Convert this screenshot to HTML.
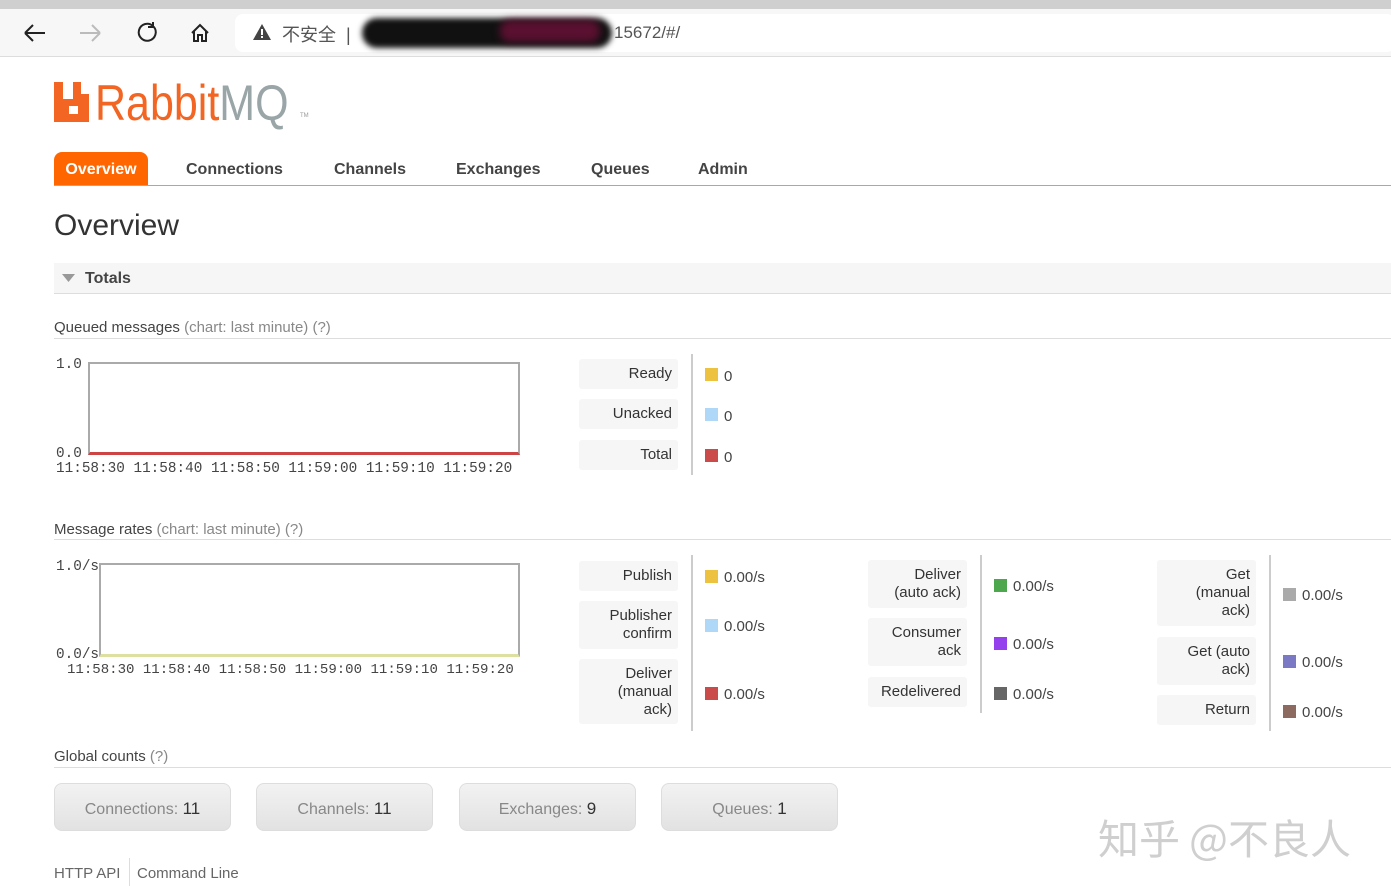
<!DOCTYPE html>
<html><head><meta charset="utf-8"><style>
*{margin:0;padding:0;box-sizing:border-box}
body{width:1391px;height:886px;overflow:hidden;background:#fff;font-family:"Liberation Sans","Noto Sans CJK SC",sans-serif;color:#333;position:relative}
.a{position:absolute;white-space:nowrap}
.lab{position:absolute;background:#f6f6f6;border-radius:3px;text-align:right;padding:6px 6px 0 0;font-size:15px;line-height:18px;color:#333;width:99px}
.sw{position:absolute;width:13px;height:13px}
.val{position:absolute;font-size:15px;color:#444;margin-top:2px}
.vl{position:absolute;width:2px;background:#ccc}
.mono{font-family:"Liberation Mono",monospace;font-size:14.35px;color:#444}
.btn{position:absolute;top:783px;width:177px;height:48px;border-radius:8px;background:linear-gradient(#f2f2f2,#e2e2e2);border:1px solid #ddd;text-align:center;line-height:50px;font-size:16px;color:#888}
.btn b{color:#333;font-weight:normal;font-size:17px}
.nav{position:absolute;top:161px;font-size:16px;font-weight:bold;color:#444}
</style></head><body>
<div class="a" style="left:0;top:0;width:1391px;height:9px;background:#cfcfcf"></div>
<div class="a" style="left:0;top:9px;width:1391px;height:48px;background:#f7f7f7;border-bottom:1px solid #ddd"></div>
<svg class="a" style="left:22px;top:20px" width="200" height="26" viewBox="0 0 200 26">
<path d="M3 13H23M3 13L11 5M3 13L11 21" stroke="#222" stroke-width="2" fill="none"/>
<path d="M58 13H78M78 13L70 5M78 13L70 21" stroke="#bbb" stroke-width="2" fill="none"/>
<path d="M131 6A8.5 8.5 0 1 0 131.5 6.5M131 2V7H126" stroke="#222" stroke-width="2" fill="none"/>
<path d="M170 13L178 5L186 13M172 11V21H176V15H180V21H184V11" stroke="#222" stroke-width="2" fill="none"/>
</svg>
<div class="a" style="left:235px;top:14px;width:1160px;height:38px;background:#fff;border-radius:8px"></div>
<svg class="a" style="left:252px;top:23px" width="20" height="18"><path d="M10 1L19 17H1Z" fill="#444"/><rect x="9" y="6" width="2" height="6" fill="#fff"/><rect x="9" y="13" width="2" height="2" fill="#fff"/></svg>
<div class="a" style="left:282px;top:21px;font-size:18px;color:#555">不安全 &nbsp;|</div>
<div class="a" style="left:362px;top:18px;width:250px;height:30px;background:#111;border-radius:15px;filter:blur(3px)"></div>
<div class="a" style="left:500px;top:20px;width:100px;height:22px;background:#5a1030;border-radius:10px;filter:blur(4px)"></div>
<div class="a" style="left:614px;top:23px;font-size:17px;color:#555">15672/#/</div>

<svg class="a" style="left:54px;top:82px" width="40" height="40"><path d="M0 0H9V17H19V0H27V12H35V40H0Z" fill="#f26522"/><rect x="15" y="24" width="9" height="8" fill="#fff"/></svg>
<div class="a" style="left:95px;top:74px;font-size:50px;color:#f26522;letter-spacing:0px;transform:scaleX(0.86);transform-origin:left;font-weight:300">Rabbit<span style="color:#9aa5a8">MQ</span></div>
<div class="a" style="left:300px;top:113px;font-size:6px;color:#999">TM</div>

<div class="a" style="left:54px;top:152px;width:94px;height:33px;background:#f60;border-radius:8px 8px 0 0;color:#fff;font-weight:bold;font-size:16px;text-align:center;line-height:35px">Overview</div>
<div class="nav" style="left:186px">Connections</div>
<div class="nav" style="left:334px">Channels</div>
<div class="nav" style="left:456px">Exchanges</div>
<div class="nav" style="left:591px">Queues</div>
<div class="nav" style="left:698px">Admin</div>
<div class="a" style="left:54px;top:185px;width:1337px;height:1px;background:#e0a040"></div>

<div class="a" style="left:54px;top:209px;font-size:30px;color:#333">Overview</div>
<div class="a" style="left:54px;top:263px;width:1337px;height:31px;background:#f6f6f6;border-bottom:1px solid #ddd"></div>
<svg class="a" style="left:62px;top:274px" width="14" height="10"><path d="M0 0H13L6.5 8Z" fill="#999"/></svg>
<div class="a" style="left:85px;top:270px;font-size:16px;font-weight:bold;color:#444">Totals</div>

<div class="a" style="left:54px;top:319px;font-size:15px;color:#444">Queued messages <span style="color:#888">(chart: last minute) (?)</span></div>
<div class="a" style="left:54px;top:338px;width:1337px;height:1px;background:#ddd"></div>
<div class="a mono" style="left:56px;top:357px">1.0</div>
<div class="a mono" style="left:56px;top:446px">0.0</div>
<div class="a" style="left:88px;top:362px;width:432px;height:93px;border:2px solid #aaa;border-bottom:3px solid #c44"></div>
<div class="a mono" style="left:56px;top:461px">11:58:30 11:58:40 11:58:50 11:59:00 11:59:10 11:59:20</div>
<div class="lab" style="left:579px;top:359px;height:30px">Ready</div>
<div class="lab" style="left:579px;top:399px;height:30px">Unacked</div>
<div class="lab" style="left:579px;top:440px;height:30px">Total</div>
<div class="vl" style="left:691px;top:354px;height:121px"></div>
<div class="sw" style="left:705px;top:368px;background:#edc240"></div><div class="val" style="left:724px;top:366px">0</div>
<div class="sw" style="left:705px;top:408px;background:#afd8f8"></div><div class="val" style="left:724px;top:406px">0</div>
<div class="sw" style="left:705px;top:449px;background:#cb4b4b"></div><div class="val" style="left:724px;top:447px">0</div>

<div class="a" style="left:54px;top:521px;font-size:15px;color:#444">Message rates <span style="color:#888">(chart: last minute) (?)</span></div>
<div class="a" style="left:54px;top:539px;width:1337px;height:1px;background:#ddd"></div>
<div class="a mono" style="left:56px;top:559px">1.0/s</div>
<div class="a mono" style="left:56px;top:647px">0.0/s</div>
<div class="a" style="left:99px;top:563px;width:421px;height:94px;border:2px solid #aaa;border-bottom:3px solid #dde0a0"></div>
<div class="a mono" style="left:67px;top:662px;font-size:14.05px">11:58:30 11:58:40 11:58:50 11:59:00 11:59:10 11:59:20</div>

<div class="lab" style="left:579px;top:561px;height:30px">Publish</div>
<div class="lab" style="left:579px;top:601px;height:48px">Publisher<br>confirm</div>
<div class="lab" style="left:579px;top:659px;height:65px">Deliver<br>(manual<br>ack)</div>
<div class="vl" style="left:691px;top:555px;height:176px"></div>
<div class="sw" style="left:705px;top:570px;background:#edc240"></div><div class="val" style="left:724px;top:567px">0.00/s</div>
<div class="sw" style="left:705px;top:619px;background:#afd8f8"></div><div class="val" style="left:724px;top:616px">0.00/s</div>
<div class="sw" style="left:705px;top:687px;background:#cb4b4b"></div><div class="val" style="left:724px;top:684px">0.00/s</div>

<div class="lab" style="left:868px;top:560px;height:48px">Deliver<br>(auto ack)</div>
<div class="lab" style="left:868px;top:618px;height:48px">Consumer<br>ack</div>
<div class="lab" style="left:868px;top:677px;height:30px">Redelivered</div>
<div class="vl" style="left:980px;top:555px;height:158px"></div>
<div class="sw" style="left:994px;top:579px;background:#4da74d"></div><div class="val" style="left:1013px;top:576px">0.00/s</div>
<div class="sw" style="left:994px;top:637px;background:#9440ed"></div><div class="val" style="left:1013px;top:634px">0.00/s</div>
<div class="sw" style="left:994px;top:687px;background:#666"></div><div class="val" style="left:1013px;top:684px">0.00/s</div>

<div class="lab" style="left:1157px;top:560px;height:66px">Get<br>(manual<br>ack)</div>
<div class="lab" style="left:1157px;top:637px;height:48px">Get (auto<br>ack)</div>
<div class="lab" style="left:1157px;top:695px;height:30px">Return</div>
<div class="vl" style="left:1269px;top:555px;height:176px"></div>
<div class="sw" style="left:1283px;top:588px;background:#aaa"></div><div class="val" style="left:1302px;top:585px">0.00/s</div>
<div class="sw" style="left:1283px;top:655px;background:#7c79c4"></div><div class="val" style="left:1302px;top:652px">0.00/s</div>
<div class="sw" style="left:1283px;top:705px;background:#8d6a5f"></div><div class="val" style="left:1302px;top:702px">0.00/s</div>

<div class="a" style="left:54px;top:748px;font-size:15px;color:#444">Global counts <span style="color:#888">(?)</span></div>
<div class="a" style="left:54px;top:767px;width:1337px;height:1px;background:#ddd"></div>
<div class="btn" style="left:54px">Connections: <b>11</b></div>
<div class="btn" style="left:256px">Channels: <b>11</b></div>
<div class="btn" style="left:459px">Exchanges: <b>9</b></div>
<div class="btn" style="left:661px">Queues: <b>1</b></div>

<div class="a" style="left:54px;top:865px;font-size:15px;color:#666">HTTP API</div>
<div class="a" style="left:129px;top:858px;width:1px;height:28px;background:#ddd"></div>
<div class="a" style="left:137px;top:865px;font-size:15px;color:#666">Command Line</div>

<div class="a" style="left:1098px;top:806px;font-size:41px;color:#cfcfcf;font-family:'Noto Sans CJK SC',sans-serif">知乎 @不良人</div>
</body></html>
